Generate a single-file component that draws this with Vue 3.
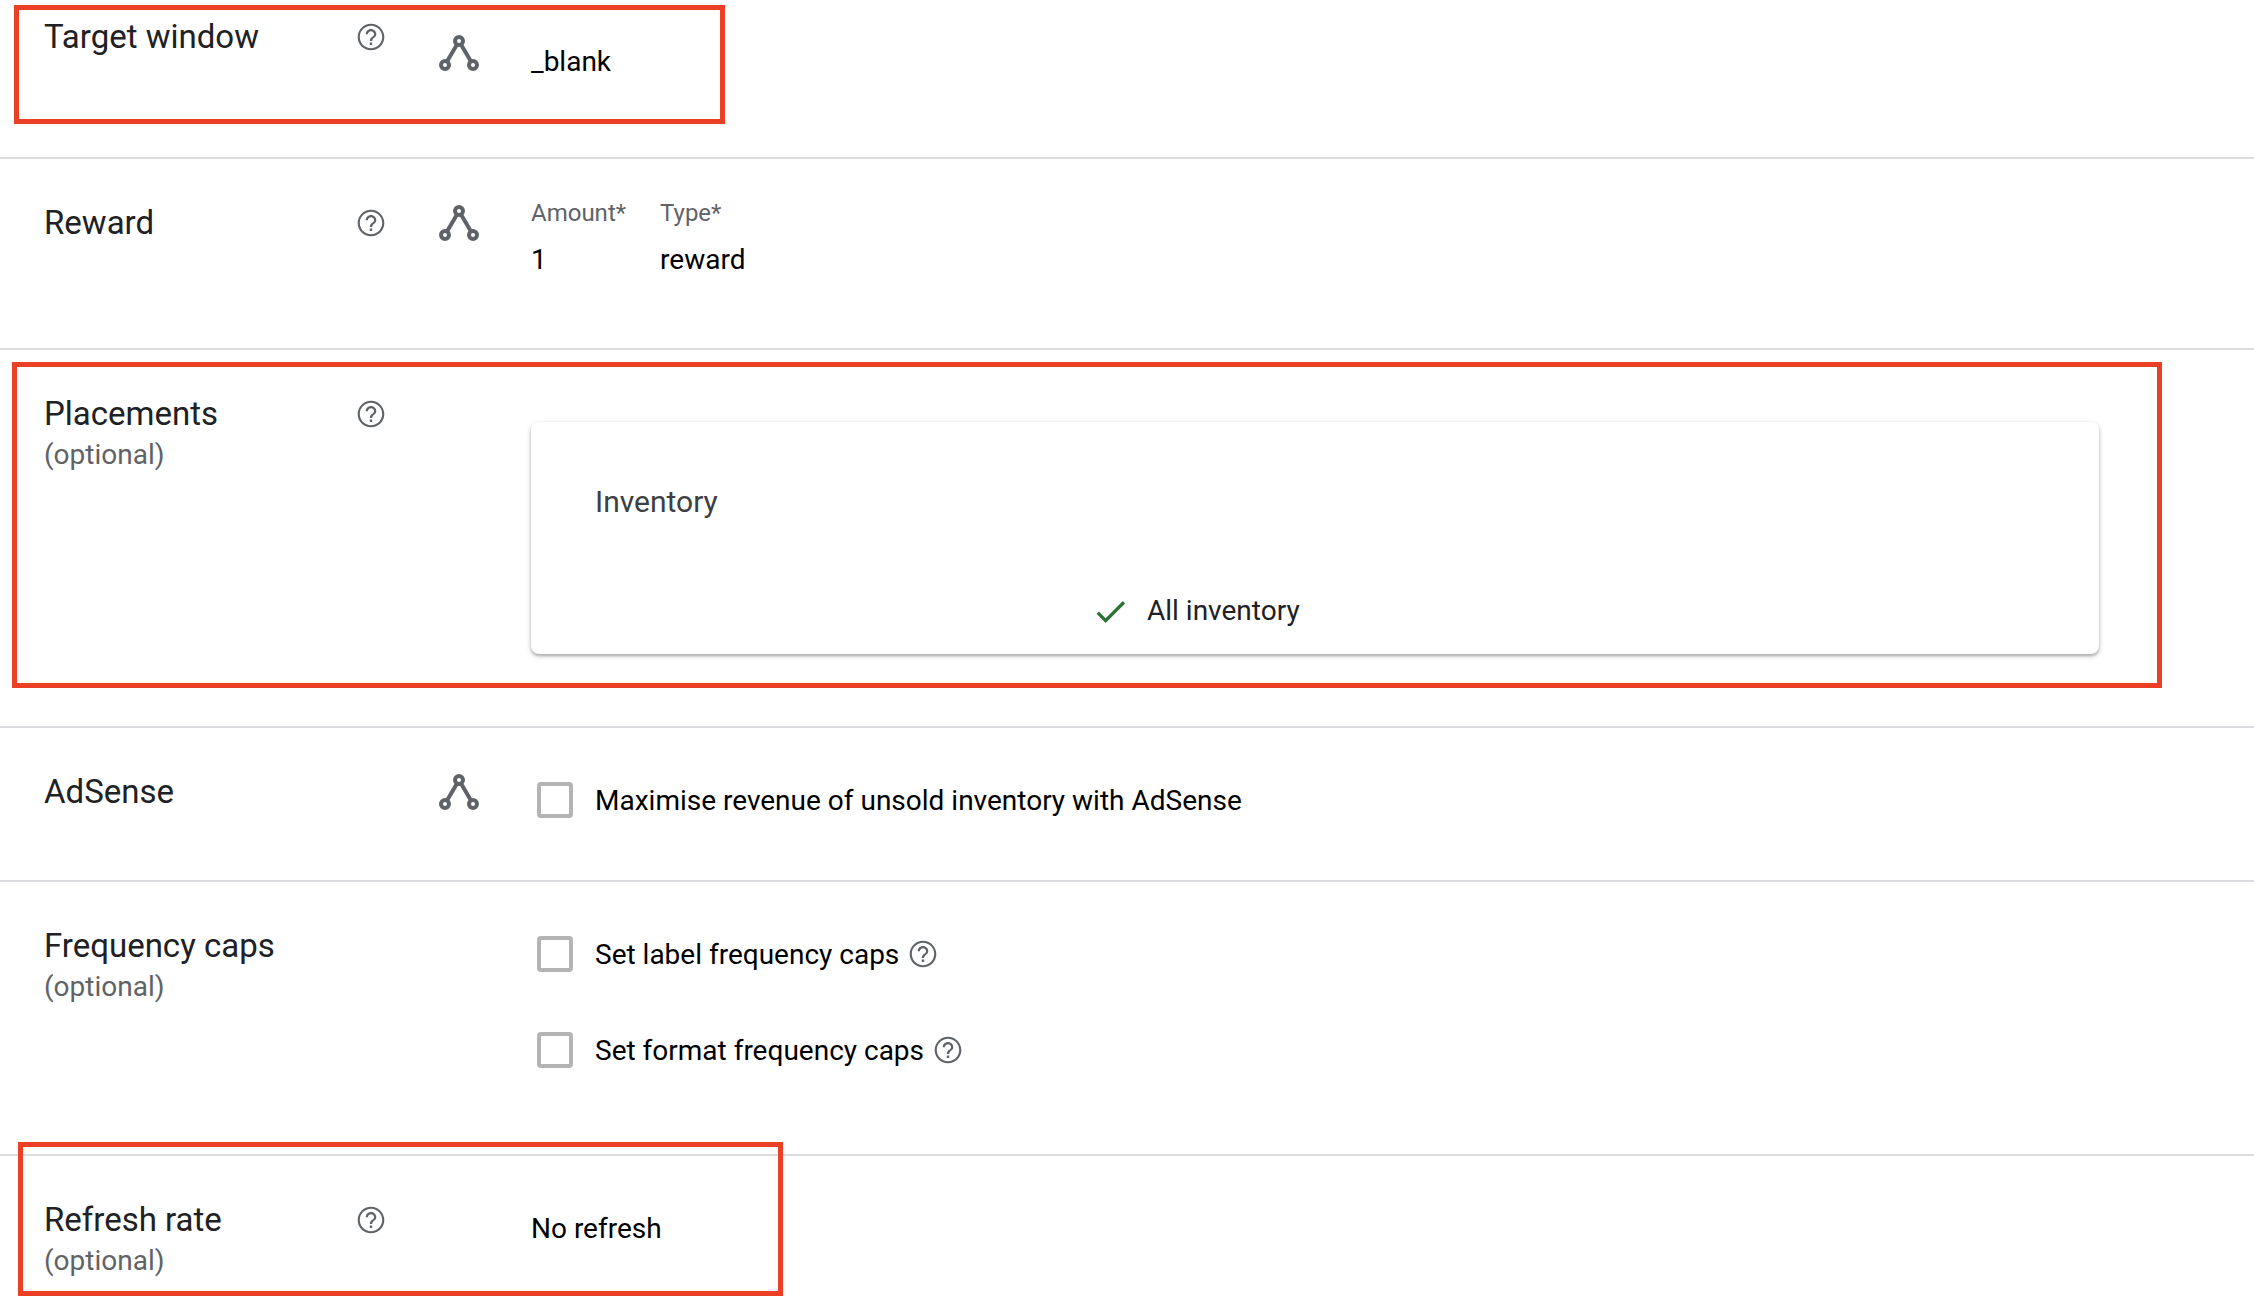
<script setup>
import { h } from 'vue'

const HelpButton = (props) =>
  h('button', { type: 'button', class: 'help', 'aria-label': 'Help: ' + props.topic }, [
    h('svg', { viewBox: '0 0 24 24', width: 32, height: 32, fill: 'currentColor', 'aria-hidden': 'true' }, [
      h('path', {
        d: 'M11.1 18h1.8v-1.8h-1.8V18zM12 2C6.48 2 2 6.48 2 12s4.48 10 10 10 10-4.48 10-10S17.52 2 12 2zm0 18.4c-4.64 0-8.4-3.76-8.4-8.4S7.36 3.6 12 3.6s8.4 3.76 8.4 8.4-3.76 8.4-8.4 8.4zM12 6c-2.21 0-4 1.79-4 4h1.7c0-1.27 1.03-2.3 2.3-2.3s2.3 1.03 2.3 2.3c0 2-3.2 1.75-3.2 5h1.8c0-2.25 3.1-2.5 3.1-5 0-2.21-1.79-4-4-4z',
      }),
    ]),
  ])
HelpButton.props = ['topic']

const NodesIcon = () =>
  h('svg', { class: 'nodes', viewBox: '0 0 40 36', width: 40, height: 36, fill: 'none', stroke: 'currentColor', 'stroke-width': 4, 'aria-hidden': 'true' }, [
    h('path', { d: 'M18 9.5 8 26.5M22 9.5 32 26.5' }),
    h('circle', { cx: 20, cy: 6, r: 4 }),
    h('circle', { cx: 6, cy: 30, r: 4 }),
    h('circle', { cx: 34, cy: 30, r: 4 }),
  ])

const caps = [
  { id: 'label-caps', text: 'Set label frequency caps' },
  { id: 'format-caps', text: 'Set format frequency caps' },
]
</script>

<template>
  <main class="settings">
    <section class="row target">
      <h2 class="name">Target window</h2>
      <HelpButton topic="Target window" />
      <NodesIcon />
      <div class="content">_blank</div>
      <div class="mark"></div>
    </section>

    <section class="row reward">
      <h2 class="name">Reward</h2>
      <HelpButton topic="Reward" />
      <NodesIcon />
      <dl class="content fields">
        <div>
          <dt>Amount*</dt>
          <dd>1</dd>
        </div>
        <div>
          <dt>Type*</dt>
          <dd>reward</dd>
        </div>
      </dl>
    </section>

    <section class="row placements">
      <div class="heading">
        <h2 class="name">Placements</h2>
        <p class="optional">(optional)</p>
      </div>
      <HelpButton topic="Placements" />
      <div class="content card">
        <h3>Inventory</h3>
        <div class="targets">
          <p class="target-item">
            <svg viewBox="0 0 24 24" width="39" height="39" fill="#2b7335" aria-hidden="true">
              <path d="M9 16.17 4.83 12l-1.42 1.41L9 19 21 7l-1.41-1.41z" />
            </svg>
            All inventory
          </p>
        </div>
      </div>
      <div class="mark"></div>
    </section>

    <section class="row adsense">
      <h2 class="name">AdSense</h2>
      <NodesIcon />
      <div class="content checks">
        <div class="check">
          <input id="maximise" type="checkbox" />
          <label for="maximise">Maximise revenue of unsold inventory with AdSense</label>
        </div>
      </div>
    </section>

    <section class="row caps">
      <div class="heading">
        <h2 class="name">Frequency caps</h2>
        <p class="optional">(optional)</p>
      </div>
      <div class="content checks">
        <div v-for="cap in caps" :key="cap.id" class="check">
          <input :id="cap.id" type="checkbox" />
          <label :for="cap.id">{{ cap.text }}</label>
          <HelpButton :topic="cap.text" />
        </div>
      </div>
    </section>

    <section class="row refresh">
      <div class="heading">
        <h2 class="name">Refresh rate</h2>
        <p class="optional">(optional)</p>
      </div>
      <HelpButton topic="Refresh rate" />
      <div class="content">No refresh</div>
      <div class="mark"></div>
    </section>
  </main>
</template>

<style>
body {
  background: #fff;
}
</style>

<style scoped>
.settings {
  font: 28px/40px Roboto, 'Liberation Sans', sans-serif;
  color: #000;
}
h2, h3, p, dl, dd {
  margin: 0;
  font-weight: 400;
}
.row {
  position: relative;
  display: grid;
  grid-template-columns: 311px 84px 92px minmax(0, 1fr);
  align-items: start;
  padding: 44px 155px 60px 44px;
  border-bottom: 2px solid #dadce0;
}
.row:last-child {
  border-bottom: 0;
}
.name {
  grid-row: 1;
  font-size: 33px;
  line-height: 40px;
  color: #202124;
}
.optional {
  margin-top: 1px;
  color: #5f6368;
}
.help {
  grid-row: 1;
  grid-column: 2;
  display: block;
  width: 32px;
  height: 32px;
  margin: 4px 0;
  padding: 0;
  border: 0;
  background: none;
  color: #5f6368;
  cursor: pointer;
}
.help :deep(svg) {
  display: block;
}
.nodes {
  grid-row: 1;
  grid-column: 3;
  margin-top: 2px;
  color: #5f6368;
}
.content {
  grid-row: 1;
  grid-column: 4;
}

.target {
  padding-top: 17px;
  padding-bottom: 75px;
}
.target .nodes {
  margin-top: 18px;
}
.target .content {
  margin-top: 25px;
}

.reward {
  padding-top: 38px;
  padding-bottom: 68px;
}
.reward .name {
  margin-top: 6px;
}
.reward .help {
  margin-top: 10px;
}
.reward .nodes {
  margin-top: 8px;
}
.fields {
  display: flex;
  gap: 34px;
}
.fields dt {
  margin-bottom: 11px;
  font-size: 24px;
  line-height: 32px;
  color: #5f6368;
}

.placements {
  padding-bottom: 72px;
}
.card {
  margin-top: 28px;
  padding: 60px 64px 23px;
  border-radius: 8px;
  box-shadow: 0 2px 3px rgba(0, 0, 0, 0.26), 0 2px 6px rgba(0, 0, 0, 0.14);
}
.card h3 {
  font-size: 30px;
  color: #3c4043;
}
.targets {
  display: grid;
  grid-template-columns: 31fr 59fr;
  margin-top: 69px;
}
.target-item {
  grid-column: 2;
  display: flex;
  align-items: center;
  gap: 17px;
  color: #202124;
}

.checks {
  display: grid;
  gap: 56px;
  margin-top: 8px;
}
.check {
  display: flex;
  align-items: center;
  height: 40px;
}
.check input {
  appearance: none;
  box-sizing: border-box;
  width: 36px;
  height: 36px;
  margin: 0 22px 0 6px;
  border: 4px solid #b4b4b4;
  border-radius: 4px;
  background: #fff;
}
.check input:checked {
  background: #1a73e8;
}
.check label {
  padding-top: 2px;
}
.check .help {
  margin: 0 8px;
}
.caps {
  padding-bottom: 84px;
}

.refresh {
  padding-bottom: 24px;
}
.refresh .content {
  margin-top: 9px;
}

/* Highlight frames drawn over the rows */
.mark {
  position: absolute;
  border: 5px solid #eb4026;
  pointer-events: none;
}
.target .mark {
  top: 5px;
  bottom: 33px;
  left: 14px;
  width: 701px;
}
.placements .mark {
  top: 12px;
  right: 92px;
  bottom: 38px;
  left: 12px;
}
.refresh .mark {
  top: -14px;
  bottom: 9px;
  left: 18px;
  width: 755px;
}
</style>
